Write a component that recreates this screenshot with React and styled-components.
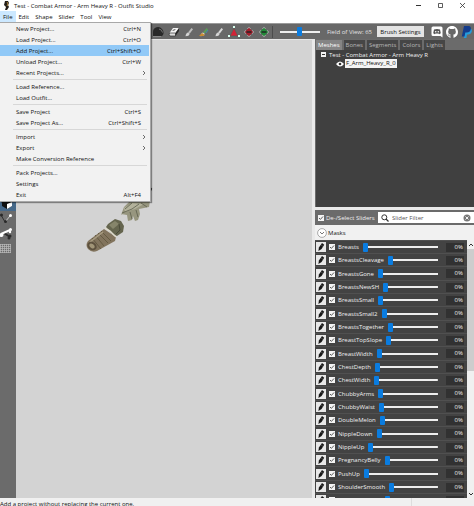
import React from "react";
import styled, { createGlobalStyle, css } from "styled-components";

const GlobalStyle = createGlobalStyle`
  * { box-sizing: border-box; }
  body { margin: 0; overflow: hidden; }
  body, button, input { font: 6px/10px "Open Sans", "Noto Sans", sans-serif; }
  button { border: 0; padding: 0; background: none; color: inherit; }
  svg { display: block; flex: none; }
`;

const Window = styled.div`
  height: 100vh;
  display: flex;
  flex-direction: column;
  background: #6b6b6b;
  color: #111;
`;

const TitleBar = styled.header`
  display: flex;
  align-items: center;
  height: 11px;
  padding: 0 8px 0 4px;
  gap: 4px;
  background: #fff;
`;
const Title = styled.h1`
  flex: 1;
  margin: 0;
  font: inherit;
`;
const WindowButtons = styled.div`
  display: flex;
  gap: 15px;
`;

const MenuBar = styled.nav`
  position: relative;
  z-index: 2;
  display: flex;
  height: 12px;
  background: #fff;
`;
const MenuBarItem = styled.button`
  height: 11px;
  padding: 0 3px;
  ${(p) => p.$open && css`background: #cce8ff;`}
`;
const Dropdown = styled.div`
  position: absolute;
  top: 11px;
  left: 0;
  width: 151px;
  padding: 0 1px 1px 0;
  background: #f2f2f2;
  border: 1px solid #a8a8a8;
  border-left: 0;
  box-shadow: 1px 1px 1px #0006;
`;
const MenuItem = styled.button`
  display: flex;
  align-items: center;
  justify-content: space-between;
  width: 100%;
  height: 11px;
  padding: 0 8px 0 16px;
  background: ${(p) => (p.$active ? "#91c9f7" : "transparent")};
`;
const MenuRule = styled.hr`
  height: 1px;
  margin: 1px 2px 1px 13px;
  border: 0;
  background: #d7d7d7;
`;
const SubmenuArrow = styled.svg`
  margin-right: -5px;
`;

const Toolbar = styled.div`
  display: flex;
  align-items: center;
  justify-content: flex-end;
  height: 16px;
  padding-right: 1px;
  background: #686868;
  color: #e2e2e2;
  border-top: 1px solid #9a9a9a;
`;
const BrushTools = styled.div`
  display: flex;
  gap: 3px;
  padding-right: 2px;
  border-right: 1px solid #4c4c4c;
`;
const ToolButton = styled.button`
  width: 12px;
  height: 12px;
`;
const FieldOfView = styled.label`
  display: flex;
  align-items: center;
  gap: 7px;
  margin: 0 5px 0 7px;
  white-space: nowrap;
`;
const BrushSettings = styled.button`
  width: 47px;
  height: 11px;
  margin-right: 7px;
  background: #e4e4e4;
  color: #111;
`;
const Links = styled.div`
  display: flex;
  gap: 3px;
`;

const Range = styled.input`
  appearance: none;
  display: block;
  flex: ${(p) => (p.$width ? "none" : "1")};
  width: ${(p) => p.$width || "0"};
  min-width: 0;
  height: 9px;
  margin: 0;
  background: linear-gradient(#eee, #eee) center / 100% 2px no-repeat;
  &::-webkit-slider-thumb {
    appearance: none;
    width: 5px;
    height: 9px;
    background: #0a7ce0;
    border-radius: 1px;
  }
`;

const Workspace = styled.main`
  flex: 1;
  min-height: 0;
  display: grid;
  grid-template-columns: 16px 1fr 159px;
`;
const ModeBar = styled.div`
  display: flex;
  flex-direction: column;
  padding-top: 157px;
  background: #6b6b6b;
`;
const ModeButton = styled.button`
  height: 15px;
  background: ${(p) => (p.$on ? "#46698a" : "transparent")};
`;
const Viewport = styled.section`
  background: #d3d3d3;
  border-top: 1px solid #e6e6e6;
  border-right: 3px solid #e9e9e9;
  padding: 142px 0 0 66px;
`;

const Panel = styled.aside`
  display: flex;
  flex-direction: column;
  min-height: 0;
  background: #6b6b6b;
  color: #f0f0f0;
`;
const Tabs = styled.div`
  display: flex;
  gap: 2px;
  padding: 1px 1px 0;
`;
const Tab = styled.button`
  height: 10px;
  padding: 0 2px;
  background: ${(p) => (p.$on ? "#858585" : "#464646")};
  color: ${(p) => (p.$on ? "#fff" : "#b8b8b8")};
`;
const Tree = styled.div`
  height: 157px;
  padding-left: 5px;
  background: #404040;
  border-left: 1px solid #6b6b6b;
`;
const TreeRow = styled.div`
  display: flex;
  align-items: center;
  height: 9px;
  gap: ${(p) => (p.$child ? "1px" : "3px")};
  padding-left: ${(p) => (p.$child ? "15px" : "0")};
`;
const MeshName = styled.span`
  padding: 0 1px;
  line-height: 9px;
  background: #f4f4f4;
  color: #111;
`;
const FilterRow = styled.div`
  display: flex;
  align-items: center;
  height: 18px;
  padding-left: 3px;
  border-top: 3px solid #e9e9e9;
`;
const SelectAll = styled.label`
  display: flex;
  align-items: center;
  gap: 2px;
  width: 60px;
  white-space: nowrap;
`;
const Check = styled.input`
  appearance: none;
  width: 6px;
  height: 6px;
  margin: 0;
  background: #f4f4f4;
  & + svg { visibility: hidden; pointer-events: none; }
  &:checked + svg { visibility: visible; }
`;
const CheckWrap = styled.span`
  display: grid;
  flex: none;
  & > * { grid-area: 1 / 1; }
`;
const SearchBox = styled.label`
  flex: 1;
  min-width: 0;
  display: flex;
  align-items: center;
  gap: 3px;
  height: 11px;
  padding: 0 3px;
  background: #fff;
`;
const SearchInput = styled.input`
  flex: 1;
  min-width: 0;
  padding: 0;
  border: 0;
  outline: 0;
  background: none;
  &::placeholder { color: #555; }
`;
const MasksHeader = styled.button`
  display: flex;
  align-items: center;
  gap: 1px;
  height: 15px;
  flex: none;
  padding: 0 2px;
  background: #f1f1f1;
  color: #111;
`;
const SliderArea = styled.div`
  flex: 1;
  min-height: 0;
  display: flex;
`;
const SliderList = styled.div`
  flex: 1;
  min-width: 0;
  overflow: hidden;
  display: grid;
  grid-auto-rows: 13px 13px 14px;
  padding-top: 1px;
  background: #505050;
`;
const SliderRow = styled.div`
  display: flex;
  align-items: center;
  margin-bottom: 1px;
  padding: 0 3px 0 1px;
  background: #434343;
`;
const EditButton = styled.button`
  flex: none;
  width: 10px;
  height: 10px;
  margin-right: 3px;
  background: #e8e8e8;
`;
const SliderName = styled.label`
  margin: 0 4px 0 3px;
`;
const Percent = styled.output`
  flex: none;
  width: 18px;
  height: 9px;
  margin-left: 8px;
  padding-right: 1px;
  line-height: 9px;
  text-align: right;
  background: #313131;
`;
const ScrollBar = styled.div`
  flex: none;
  width: 7px;
  display: flex;
  flex-direction: column;
  background: #f0f0f0;
`;
const ScrollButton = styled.button`
  height: 9px;
  padding-left: 1px;
`;
const ScrollTrack = styled.div`
  flex: 1;
`;
const ScrollThumb = styled.div`
  height: 51%;
  background: #cdcdcd;
`;
const StatusBar = styled.footer`
  flex: none;
  height: 8px;
  overflow: hidden;
  line-height: 12px;
  background: #f0f0f0;
  display: grid;
  grid-template-columns: 412px 1fr;
`;
const StatusCell = styled.span`
  border-right: 1px solid #ddd;
`;

const fileMenu = [
  ["New Project...", "Ctrl+N"],
  ["Load Project...", "Ctrl+O"],
  ["Add Project...", "Ctrl+Shift+O"],
  ["Unload Project...", "Ctrl+W"],
  ["Recent Projects...", ">"],
  null,
  ["Load Reference..."],
  ["Load Outfit..."],
  null,
  ["Save Project", "Ctrl+S"],
  ["Save Project As...", "Ctrl+Shift+S"],
  null,
  ["Import", ">"],
  ["Export", ">"],
  ["Make Conversion Reference"],
  null,
  ["Pack Projects..."],
  ["Settings"],
  ["Exit", "Alt+F4"],
];

const sliders = [
  "Breasts", "BreastsCleavage", "BreastsGone", "BreastsNewSH", "BreastsSmall",
  "BreastsSmall2", "BreastsTogether", "BreastTopSlope", "BreastWidth",
  "ChestDepth", "ChestWidth", "ChubbyArms", "ChubbyWaist", "DoubleMelon",
  "NippleDown", "NippleUp", "PregnancyBelly", "PushUp", "ShoulderSmooth",
  "ShoulderTweak",
];

const Brush = ({ color = "#bdbdbd", extra }) => (
  <svg width="12" height="12" viewBox="0 0 12 12">
    <path d="M5 6.5 8.5 2l1.500 1.200L6.800 7.600z" fill={color} />
    <path d="M2.500 10.200c.3-2 1-3.400 2.400-3.700l1.800 1.200c-.3 1.700-1.800 2.500-4.200 2.500z" fill="#d5d5d5" />
    {extra}
  </svg>
);

const Diamond = ({ color }) => (
  <svg width="12" height="12" viewBox="0 0 12 12">
    <path d="M6 .8 8.200 3H3.800zM6 11.200 3.800 9h4.400zM.8 6 3 3.800v4.400zM11.200 6 9 8.200V3.800z" fill="#a9a9a9" />
    <path d="M6 1.800 10.200 6 6 10.200 1.800 6z" fill={color} />
    <path d="M3.500 6h5" stroke="#222" strokeWidth="1.400" />
  </svg>
);

const brushTools = [
  ["Mask brush", <svg width="12" height="12" viewBox="0 0 12 12"><path d="M0 10V6a5 5 0 0 1 9-3q2.500 3 1 6L9 10z" fill="#292929" /><path d="M6 3q3 .5 3.500 3.500" fill="none" stroke="#777" /><path d="M0 10.500h8" stroke="#888" /></svg>],
  ["Inflate brush", <svg width="12" height="12" viewBox="0 0 12 12"><path d="M5 2h6L7.500 7h-6z" fill="#f4f4f4" /><path d="M1.500 7h6v3H2Q.5 9 1.500 7z" fill="#ddd" stroke="#333" strokeWidth=".7" /><path d="M7.500 7 11 2v3L7.500 10z" fill="#292929" /><path d="m4 5 2-2h2L6 5z" fill="#888" /></svg>],
  ["Smooth brush", <Brush />],
  ["Color brush", <Brush color="#5b9c57" extra={<><path d="m1 10 3-3 3 2-2 1z" fill="#ca8d31" /><path d="m8 7 2-3" stroke="#418ab0" /></>} />],
  ["Alpha brush", <Brush color="#d8d8d8" />],
  ["Vertex edit", <svg width="12" height="12" viewBox="0 0 12 12"><path d="m6 2 4 8H2z" fill="#d32236" stroke="#3e6c5c" strokeWidth=".6" /><path d="M5 0h2v2H5zM0 9h2v2H0zM10 9h2v2h-2z" fill="#d9fff0" /></svg>],
  ["Collapse", <Diamond color="#a51d2b" />],
  ["Split", <Diamond color="#228b38" />],
];

const CheckBox = ({ label }) => (
  <CheckWrap>
    <Check type="checkbox" aria-label={label} defaultChecked />
    <svg width="6" height="6" viewBox="0 0 6 6">
      <path d="m1 3 1.400 1.400L5 1.500" fill="none" stroke="#333" strokeWidth=".8" />
    </svg>
  </CheckWrap>
);

const Pencil = () => (
  <svg width="10" height="10" viewBox="0 0 10 10">
    <path d="M6 1 8.200 2.800 5.600 7 2.400 9 2.900 5.400z" fill="#161616" />
    <path d="m5 2.800 2.200 1.800" stroke="#888" strokeWidth=".5" />
  </svg>
);

export default function App() {
  return (
    <Window>
      <GlobalStyle />
      <TitleBar>
        <svg width="6" height="10" viewBox="0 0 6 10">
          <path d="M1 0h3l1 2-1 2 1 2-2 3H1l1-3-2-2z" fill="#221d18" />
          <path d="M3 1 4 3 3 5" stroke="#a8803d" fill="none" />
        </svg>
        <Title>Test - Combat Armor - Arm Heavy R - Outfit Studio</Title>
        <WindowButtons>
          <button aria-label="Minimize">
            <svg width="7" height="7" viewBox="0 0 7 7"><path d="M1 3.500h5" stroke="#333" /></svg>
          </button>
          <button aria-label="Maximize">
            <svg width="7" height="7" viewBox="0 0 7 7"><path d="M1.500 1.500h4v4h-4z" fill="none" stroke="#333" strokeWidth=".8" /></svg>
          </button>
          <button aria-label="Close">
            <svg width="7" height="7" viewBox="0 0 7 7"><path d="m1 1 5 5M6 1 1 6" stroke="#333" strokeWidth=".8" /></svg>
          </button>
        </WindowButtons>
      </TitleBar>

      <MenuBar>
        {["File", "Edit", "Shape", "Slider", "Tool", "View"].map((name) => (
          <MenuBarItem key={name} $open={name === "File"}>{name}</MenuBarItem>
        ))}
        <Dropdown>
          {fileMenu.map((entry, i) =>
            entry ? (
              <MenuItem key={i} $active={entry[0] === "Add Project..."}>
                <span>{entry[0]}</span>
                {entry[1] === ">" ? (
                  <SubmenuArrow width="4" height="6" viewBox="0 0 4 6">
                    <path d="m1 1 2 2-2 2" fill="none" stroke="#333" strokeWidth=".7" />
                  </SubmenuArrow>
                ) : (
                  <span>{entry[1]}</span>
                )}
              </MenuItem>
            ) : (
              <MenuRule key={i} />
            )
          )}
        </Dropdown>
      </MenuBar>

      <Toolbar>
        <BrushTools>
          {brushTools.map(([name, icon]) => (
            <ToolButton key={name} aria-label={name}>{icon}</ToolButton>
          ))}
        </BrushTools>
        <FieldOfView>
          <Range type="range" $width="40px" defaultValue="48" />
          Field of View: 65
        </FieldOfView>
        <BrushSettings>Brush Settings</BrushSettings>
        <Links>
          <a href="#discord" aria-label="Discord">
            <svg width="12" height="12" viewBox="0 0 12 12">
              <path d="M2 .5h8q1.500 0 1.500 1.500v9.500L9.500 10H2Q.5 10 .5 8.500V2Q.5.5 2 .5z" fill="#fff" />
              <path d="M3 3.500q3-1.200 6 0l.8 3.800-1.700 1-.6-.9h-3l-.6.9-1.700-1z" fill="#555" />
              <circle cx="4.700" cy="5.700" r=".8" fill="#fff" />
              <circle cx="7.300" cy="5.700" r=".8" fill="#fff" />
            </svg>
          </a>
          <a href="#github" aria-label="GitHub">
            <svg width="12" height="12" viewBox="0 0 16 16">
              <path fill="#fff" d="M8 0C3.580 0 0 3.580 0 8c0 3.540 2.290 6.530 5.470 7.590.4.070.55-.17.55-.38v-1.490c-2.230.48-2.700-.94-2.700-.94-.36-.93-.89-1.170-.89-1.170-.72-.5.060-.49.060-.49.800.060 1.230.82 1.230.82.71 1.230 1.870.87 2.330.67.070-.52.28-.87.500-1.070-1.780-.2-3.640-.89-3.640-3.950 0-.87.31-1.590.82-2.150-.08-.2-.36-1.020.08-2.120 0 0 .67-.21 2.200.82a7.400 7.400 0 0 1 4 0c1.530-1.040 2.200-.82 2.200-.82.44 1.100.16 1.920.08 2.120.51.56.82 1.270.82 2.150 0 3.070-1.870 3.750-3.650 3.950.29.25.54.73.54 1.480v2.190c0 .21.15.46.55.38A8 8 0 0 0 16 8c0-4.420-3.580-8-8-8z" />
            </svg>
          </a>
          <a href="#paypal" aria-label="PayPal">
            <svg width="12" height="12" viewBox="0 0 12 12">
              <path d="M4.500 2.500H9q2.500.5 1.800 3Q10 8.500 7 8.500H6L5.400 12H2.800z" fill="#249bdb" />
              <path d="M3 0h4.500Q10.500.3 9.800 3.200 9 6.500 5.800 6.500H4.300L3.500 10.500H.8z" fill="#143c8c" />
            </svg>
          </a>
        </Links>
      </Toolbar>

      <Workspace>
        <ModeBar>
          <ModeButton $on aria-label="Mesh">
            <svg width="16" height="14" viewBox="0 0 16 14">
              <path d="m7 2 5 2v5l-5 3-5-3V4z" fill="#111" />
              <path d="m7 7 5-2v4l-5 3z" fill="#fff" />
            </svg>
          </ModeButton>
          <ModeButton aria-label="Vertices">
            <svg width="16" height="14" viewBox="0 0 16 14">
              <path d="m1 3 4 7" stroke="#303030" fill="none" />
              <path d="m5 10 5-6" stroke="#ccc" />
              <circle cx="1.500" cy="3" r="1.500" fill="#292929" />
              <circle cx="5.500" cy="9.500" r="1.500" fill="#292929" />
              <circle cx="10.500" cy="3.500" r="1.500" fill="#fff" />
            </svg>
          </ModeButton>
          <ModeButton aria-label="Bones">
            <svg width="16" height="14" viewBox="0 0 16 14">
              <path d="m4 6 6 4" stroke="#2b2b2b" strokeWidth="2" />
              <circle cx="10" cy="9" r="1.500" fill="#2b2b2b" />
              <circle cx="9" cy="11" r="1.500" fill="#2b2b2b" />
              <path d="m1 7 9-4" stroke="#fff" strokeWidth="2" />
              <circle cx="10.500" cy="2.500" r="1.500" fill="#fff" />
              <circle cx="1.500" cy="8" r="2" fill="#fff" />
              <circle cx="10" cy="5" r="1.200" fill="#fff" />
            </svg>
          </ModeButton>
          <ModeButton aria-label="Grid">
            <svg width="16" height="14" viewBox="0 0 16 14">
              <path d="M.5 2v9M2.500 2v9M4.500 2v9M6.500 2v9M8.500 2v9M10.500 2v9M0 2.500h11M0 4.500h11M0 6.500h11M0 8.500h11M0 10.500h11" stroke="#bbb" strokeWidth=".7" />
            </svg>
          </ModeButton>
        </ModeBar>

        <Viewport aria-label="3D view">
          <svg width="76" height="76" viewBox="82 182 76 76">
            <path d="m121 215 3-8 6-6h20l-1 6-10 2 1 5-2 6-3 1-2-5-1 4-4 1-1-6-6-1z" fill="#97967f" />
            <path d="m124 208 8-5 12 1-9 5-10 3z" fill="#b3b29b" />
            <path d="m122 213 10-4 7-5M130 212l2 7M136 210l2 7M125 209l7-6M141 203l6 4" fill="none" stroke="#5a5d4b" strokeWidth=".8" />
            <path d="m149 187 2 2-2 4" fill="none" stroke="#333" strokeWidth="2" />
            <path d="m104 229 12 8-1 4-18 10q-5 2-9-2-3-4 0-8z" fill="#82745d" />
            <path d="m101 231 10 10M98 233l10 10M95 235l9 11M92 238l9 11" fill="none" stroke="#62583f" strokeWidth=".9" />
            <path d="m103 232-13 10" stroke="#a99d82" strokeWidth="1.500" />
            <ellipse cx="92" cy="246" rx="5" ry="4" fill="#5d513e" transform="rotate(35 92 246)" />
            <ellipse cx="92" cy="246" rx="3" ry="2" fill="#a19577" transform="rotate(35 92 246)" />
            <path d="m106 227 2-3 7-5 6 2 3 5-1 6-6 4-5-2z" fill="#65654e" />
            <path d="m109 225 6-4 4 3-6 5z" fill="#86856b" />
            <path d="m119 224 1 6-4 4" fill="none" stroke="#494a38" />
            <path d="m105 228 5 3 6 6" stroke="#dedacb" strokeWidth="1.500" fill="none" />
          </svg>
        </Viewport>

        <Panel>
          <Tabs>
            {["Meshes", "Bones", "Segments", "Colors", "Lights"].map((name) => (
              <Tab key={name} $on={name === "Meshes"}>{name}</Tab>
            ))}
          </Tabs>
          <Tree>
            <TreeRow>
              <svg width="5" height="5" viewBox="0 0 5 5">
                <path d="M0 0h5v5H0z" fill="#f2f2f2" />
                <path d="M1 2.500h3" stroke="#333" />
              </svg>
              Test - Combat Armor - Arm Heavy R
            </TreeRow>
            <TreeRow $child>
              <svg width="8" height="6" viewBox="0 0 8 6">
                <path d="M0 3q4-5 8 0-4 5-8 0z" fill="#fff" />
                <circle cx="4" cy="3" r="1.300" fill="#333" />
              </svg>
              <MeshName>F_Arm_Heavy_R_0</MeshName>
            </TreeRow>
          </Tree>
          <FilterRow>
            <SelectAll>
              <CheckBox />
              De-/Select Sliders
            </SelectAll>
            <SearchBox>
              <svg width="8" height="8" viewBox="0 0 8 8">
                <circle cx="3.300" cy="3.300" r="2.500" fill="none" stroke="#333" />
                <path d="m5 5 2.500 2.500" stroke="#333" strokeWidth="1.200" />
              </svg>
              <SearchInput aria-label="Slider Filter" placeholder="Slider Filter" />
              <svg width="8" height="8" viewBox="0 0 8 8">
                <circle cx="4" cy="4" r="3.500" fill="#777" />
                <path d="m2.500 2.500 3 3m0-3-3 3" stroke="#fff" strokeWidth=".9" />
              </svg>
            </SearchBox>
          </FilterRow>
          <MasksHeader>
            <svg width="10" height="10" viewBox="0 0 10 10">
              <circle cx="5" cy="5" r="4.400" fill="#fff" stroke="#888" strokeWidth=".7" />
              <path d="m3 4 2 2 2-2" fill="none" stroke="#555" strokeWidth=".8" />
            </svg>
            Masks
          </MasksHeader>
          <SliderArea>
            <SliderList>
              {sliders.map((name) => (
                <SliderRow key={name}>
                  <EditButton aria-label={`Edit ${name}`}><Pencil /></EditButton>
                  <CheckBox label={`Select ${name}`} />
                  <SliderName htmlFor={name}>{name}</SliderName>
                  <Range id={name} type="range" defaultValue="0" />
                  <Percent htmlFor={name}>0%</Percent>
                </SliderRow>
              ))}
            </SliderList>
            <ScrollBar>
              <ScrollButton aria-label="Scroll up">
                <svg width="6" height="6" viewBox="0 0 6 6"><path d="m1 4 2-2 2 2" fill="none" stroke="#333" /></svg>
              </ScrollButton>
              <ScrollTrack><ScrollThumb /></ScrollTrack>
              <ScrollButton aria-label="Scroll down">
                <svg width="6" height="6" viewBox="0 0 6 6"><path d="m1 2 2 2 2-2" fill="none" stroke="#333" /></svg>
              </ScrollButton>
            </ScrollBar>
          </SliderArea>
        </Panel>
      </Workspace>

      <StatusBar>
        <StatusCell>Add a project without replacing the current one.</StatusCell>
      </StatusBar>
    </Window>
  );
}
